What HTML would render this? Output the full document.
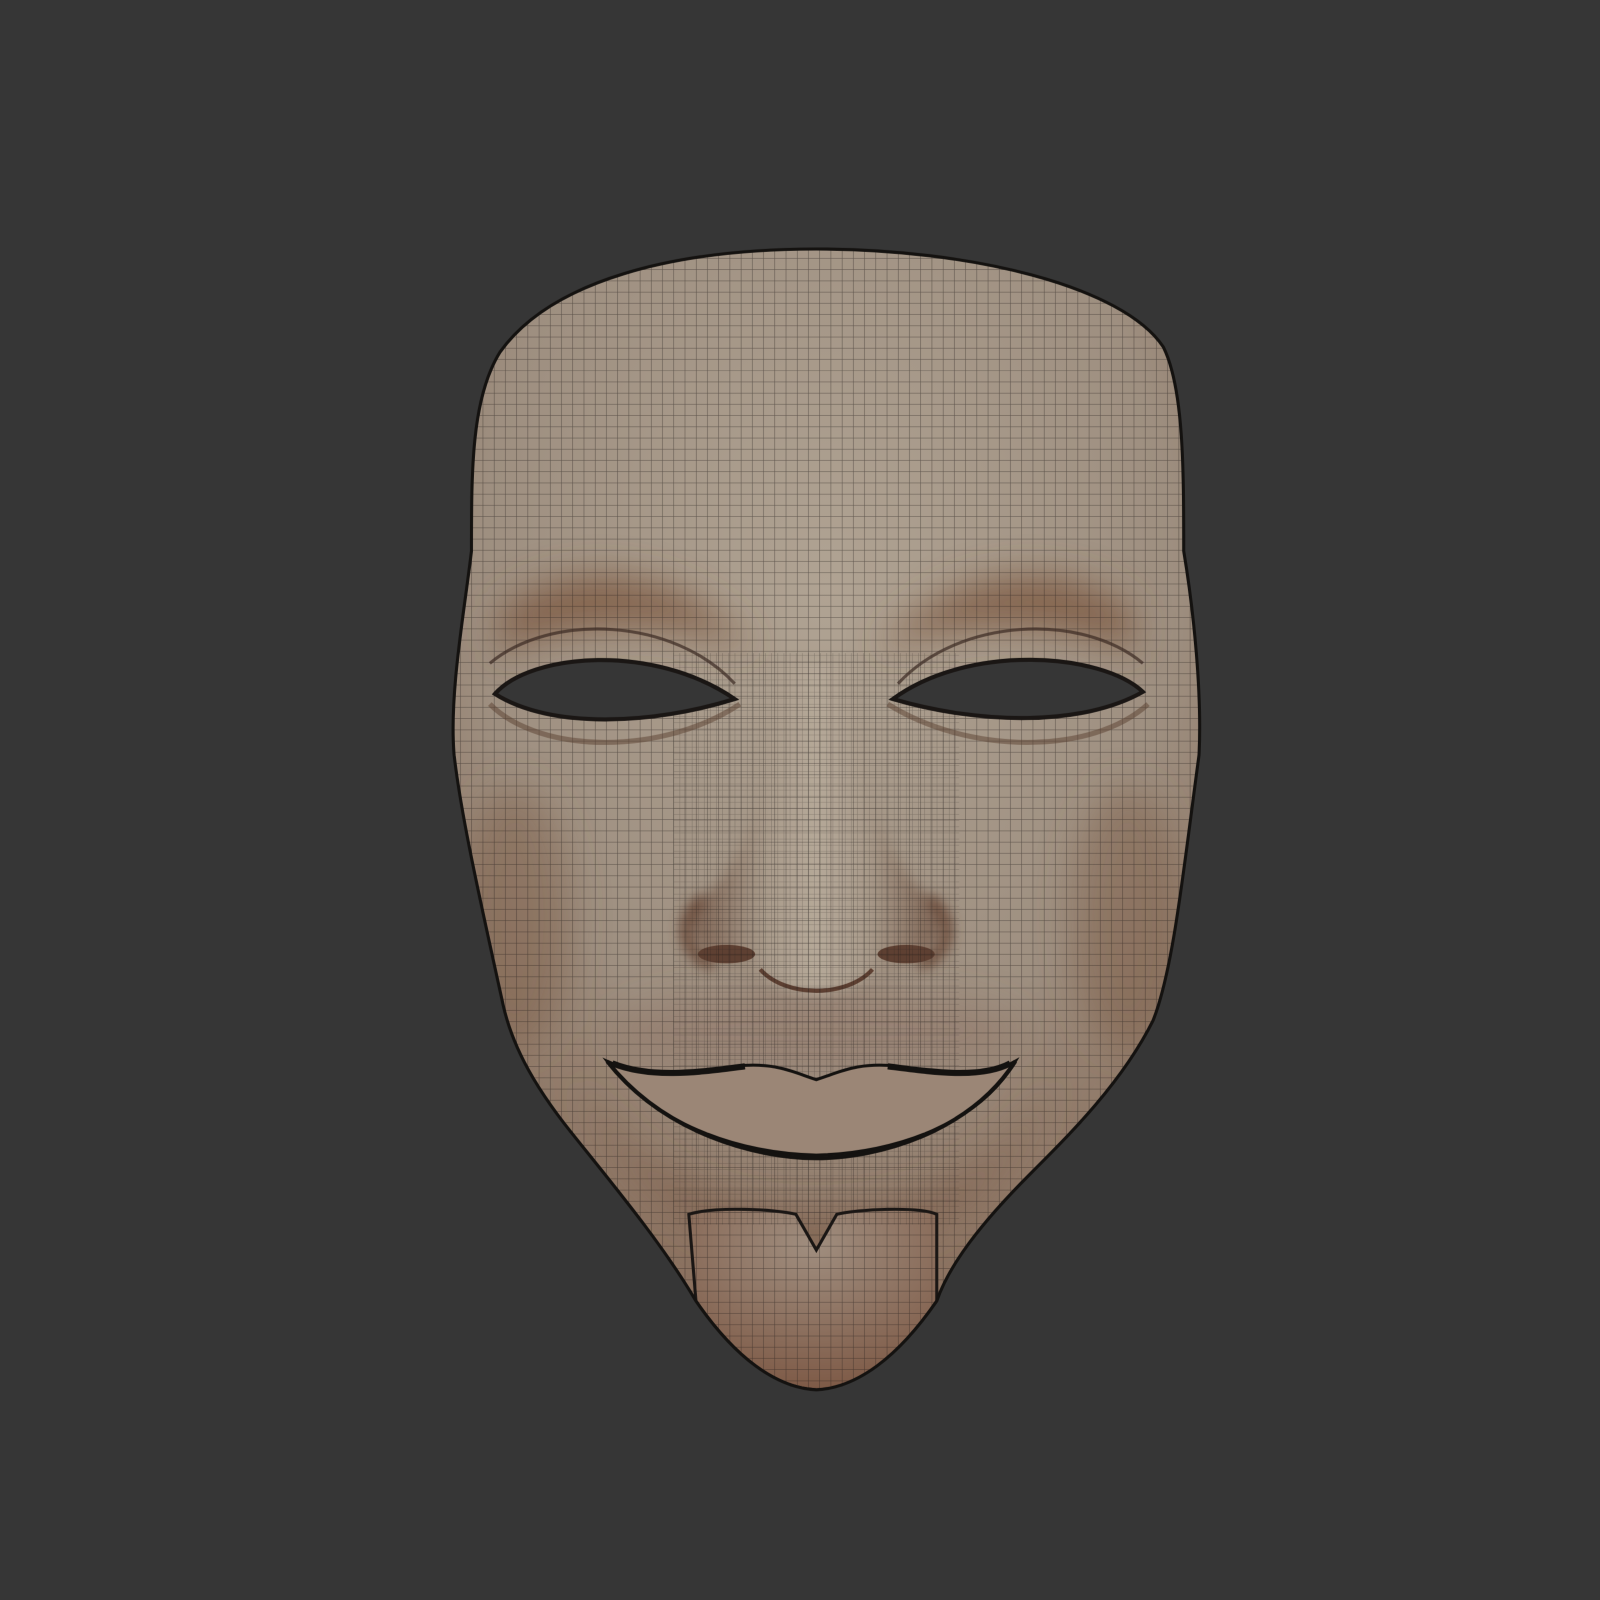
<!DOCTYPE html>
<html><head><meta charset="utf-8"><style>
html,body{margin:0;padding:0;background:#363636;width:1600px;height:1600px;overflow:hidden}
svg{display:block}
</style></head><body>
<svg width="1600" height="1600" viewBox="0 0 1568 1568" xmlns="http://www.w3.org/2000/svg">
<defs>
<pattern id="grid" width="11" height="11" patternUnits="userSpaceOnUse">
<path d="M0 0H11M0 0V11" stroke="#1e1a17" stroke-width="1" fill="none" opacity="0.55"/>
</pattern>
<pattern id="gridf" width="6" height="6" patternUnits="userSpaceOnUse">
<path d="M0 0H6M0 0V6" stroke="#1e1a17" stroke-width="0.8" fill="none" opacity="0.5"/>
</pattern>
<radialGradient id="skin" cx="0.5" cy="0.3" r="0.75">
<stop offset="0" stop-color="#b0a393"/>
<stop offset="0.55" stop-color="#9e8f80"/>
<stop offset="1" stop-color="#7d5c48"/>
</radialGradient>
<radialGradient id="chin" cx="0.5" cy="0.2" r="0.9">
<stop offset="0" stop-color="#a08e7f"/>
<stop offset="1" stop-color="#7a5440"/>
</radialGradient>
<linearGradient id="nose" x1="0" x2="1">
<stop offset="0" stop-color="#7e6454"/>
<stop offset="0.3" stop-color="#a99b8b"/>
<stop offset="0.5" stop-color="#b5a898"/>
<stop offset="0.7" stop-color="#a99b8b"/>
<stop offset="1" stop-color="#7e6454"/>
</linearGradient>
<filter id="blur" x="-50%" y="-50%" width="200%" height="200%"><feGaussianBlur stdDeviation="18"/></filter>
<filter id="blur2" x="-50%" y="-50%" width="200%" height="200%"><feGaussianBlur stdDeviation="6"/></filter>
<clipPath id="mask"><path id="mp" d="M800 244 C950 244 1100 280 1140 340 C1160 380 1160 460 1160 540 C1170 600 1178 680 1175 740 C1160 850 1150 950 1130 1000 C1100 1060 1050 1110 1010 1150 C960 1200 930 1240 918 1275 C880 1330 840 1360 800 1362 C760 1360 720 1330 682 1275 C650 1220 600 1160 560 1110 C520 1060 500 1020 492 980 C470 880 452 800 445 740 C440 680 455 600 462 540 C462 460 462 390 490 345 C540 275 660 244 800 244Z"/></clipPath>
</defs>
<rect width="1568" height="1568" fill="#363636"/>
<g clip-path="url(#mask)">
<rect x="400" y="230" width="820" height="1150" fill="url(#skin)"/>
<g filter="url(#blur)">
<path d="M490 600 C560 540 680 560 740 640 C680 610 560 600 490 640Z" fill="#7a5540" opacity="0.8"/>
<path d="M1110 600 C1040 540 920 560 860 640 C920 610 1040 600 1110 640Z" fill="#7a5540" opacity="0.8"/>
<ellipse cx="505" cy="900" rx="55" ry="130" fill="#80604c" opacity="0.5"/>
<ellipse cx="1105" cy="900" rx="55" ry="130" fill="#80604c" opacity="0.5"/>
<path d="M560 1040 C600 1140 700 1190 800 1190 C900 1190 1000 1140 1040 1040 C1000 1170 900 1230 800 1230 C700 1230 600 1170 560 1040Z" fill="#7a5a48" opacity="0.6"/>
<ellipse cx="800" cy="1010" rx="200" ry="40" fill="#8b6f5e" opacity="0.4"/>
</g>
<!-- nose -->
<g filter="url(#blur2)">
<path d="M765 650 C755 760 735 830 700 870 C660 900 680 945 740 950 C770 980 830 980 860 950 C920 945 940 900 900 870 C865 830 845 760 835 650Z" fill="url(#nose)"/>
<path d="M690 880 C660 900 670 940 700 945" fill="none" stroke="#6a4a38" stroke-width="10"/>
<path d="M910 880 C940 900 930 940 900 945" fill="none" stroke="#6a4a38" stroke-width="10"/>
</g>
<ellipse cx="712" cy="935" rx="28" ry="9" fill="#5e4032"/>
<ellipse cx="888" cy="935" rx="28" ry="9" fill="#5e4032"/>
<path d="M745 950 C770 978 830 978 855 950" fill="none" stroke="#5e4032" stroke-width="4"/>
<!-- chin piece -->
<path d="M675 1190 C700 1182 760 1185 780 1190 L800 1225 L820 1190 C840 1185 900 1182 918 1190 L918 1275 C880 1330 840 1362 800 1362 C760 1360 720 1330 682 1275Z" fill="url(#chin)" stroke="#1a1614" stroke-width="3"/>
<rect x="400" y="230" width="820" height="1150" fill="url(#grid)"/>
<rect x="660" y="640" width="280" height="560" fill="url(#gridf)" opacity="0.7"/>
</g>
<use href="#mp" fill="none" stroke="#141210" stroke-width="3"/>
<!-- eye holes -->
<path d="M485 680 C520 640 640 630 720 685 C640 710 540 715 485 680Z" fill="#363636" stroke="#1a1614" stroke-width="4"/>
<path d="M875 685 C950 630 1080 640 1120 678 C1060 712 960 710 875 685Z" fill="#363636" stroke="#1a1614" stroke-width="4"/>
<path d="M480 690 C530 740 650 740 725 690" fill="none" stroke="#5a4030" stroke-width="5" opacity="0.5"/>
<path d="M870 690 C950 740 1070 740 1125 690" fill="none" stroke="#5a4030" stroke-width="5" opacity="0.5"/>
<path d="M480 650 C540 600 660 605 720 670" fill="none" stroke="#3a2a22" stroke-width="3" opacity="0.7"/>
<path d="M880 670 C940 605 1060 600 1120 650" fill="none" stroke="#3a2a22" stroke-width="3" opacity="0.7"/>
<!-- mouth -->
<path d="M595 1040 C640 1060 680 1052 720 1045 C760 1040 780 1052 800 1058 C820 1052 840 1040 880 1045 C920 1052 960 1060 995 1040 C960 1100 880 1130 800 1132 C720 1130 640 1100 595 1040Z" fill="#9b8676" stroke="#141210" stroke-width="3"/>
<path d="M595 1040 C650 1110 740 1135 800 1135 C860 1135 950 1110 995 1040" fill="none" stroke="#141210" stroke-width="4"/>
<path d="M600 1042 C640 1058 690 1050 730 1045" fill="none" stroke="#141210" stroke-width="6"/>
<path d="M870 1045 C910 1050 960 1058 990 1042" fill="none" stroke="#141210" stroke-width="6"/>
</svg>
</body></html>
